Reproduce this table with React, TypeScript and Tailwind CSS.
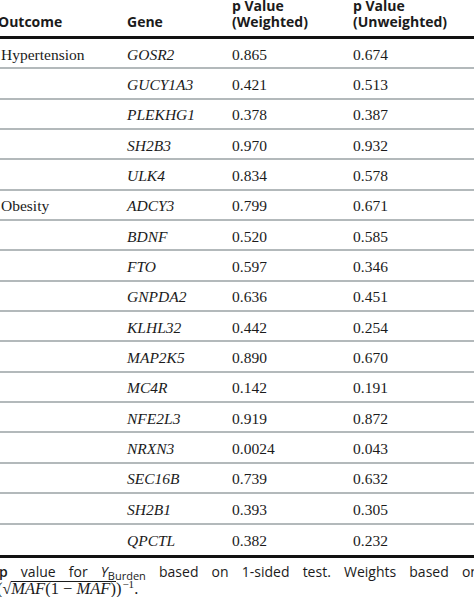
import React from "react";

const rows: [string, string, string, string][] = [
  ["Hypertension", "GOSR2", "0.865", "0.674"],
  ["", "GUCY1A3", "0.421", "0.513"],
  ["", "PLEKHG1", "0.378", "0.387"],
  ["", "SH2B3", "0.970", "0.932"],
  ["", "ULK4", "0.834", "0.578"],
  ["Obesity", "ADCY3", "0.799", "0.671"],
  ["", "BDNF", "0.520", "0.585"],
  ["", "FTO", "0.597", "0.346"],
  ["", "GNPDA2", "0.636", "0.451"],
  ["", "KLHL32", "0.442", "0.254"],
  ["", "MAP2K5", "0.890", "0.670"],
  ["", "MC4R", "0.142", "0.191"],
  ["", "NFE2L3", "0.919", "0.872"],
  ["", "NRXN3", "0.0024", "0.043"],
  ["", "SEC16B", "0.739", "0.632"],
  ["", "SH2B1", "0.393", "0.305"],
  ["", "QPCTL", "0.382", "0.232"],
];

const serif = "font-['Liberation_Serif',serif]";
const sans = "font-['Open_Sans',sans-serif]";

export default function App() {
  return (
    <div className="w-[474px] h-[597px] overflow-hidden bg-white text-[#1b1b1b] relative">
      {/* header */}
      <div className={`grid grid-cols-[127px_105px_121px_121px] ${sans} font-bold text-[14px] leading-[16px] mt-[-2px] pb-[6px] border-b-[3px] border-[#111]`}>
        <div className="self-end ml-[-2px]">Outcome</div>
        <div className="self-end">Gene</div>
        <div>
          <div>p Value</div>
          <div>(Weighted)</div>
        </div>
        <div>
          <div>p Value</div>
          <div>(Unweighted)</div>
        </div>
      </div>
      {/* body */}
      <div className={`${serif} text-[15.5px]`}>
        {rows.map((r, i) => (
          <div
            key={i}
            className={`grid grid-cols-[127px_105px_121px_121px] h-[30.35px] items-center pt-[2px] ${
              i < rows.length - 1 ? "border-b-2 border-[#b3b9bb]" : ""
            }`}
          >
            <div className="pl-[1px]">{r[0]}</div>
            <div className="italic">{r[1]}</div>
            <div>{r[2]}</div>
            <div>{r[3]}</div>
          </div>
        ))}
      </div>
      <div className="border-t-[3px] border-[#111]" />
      {/* footer */}
      <div className={`${sans} text-[14px] leading-[16px] mt-[6px] ml-[-1px] w-[480px]`}>
        <div className="whitespace-nowrap flex justify-between">
          <span className="font-semibold">p</span>
          <span>value</span>
          <span>for</span>
          <span>
            <span className="italic text-[14px]">Y</span>
            <span className="text-[11px] relative top-[3px]">Burden</span>
          </span>
          <span>based</span>
          <span>on</span>
          <span>1-sided</span>
          <span>test.</span>
          <span>Weights</span>
          <span>based</span>
          <span>on</span>
        </div>
        <div className={`${serif} text-[16.5px] leading-[15px] ml-[-2px] whitespace-nowrap`}>
          <span>(</span>
          <span className="text-[16px]">√</span>
          <span className="inline-block leading-[13px] border-t border-[#1b1b1b] italic">
            MAF<span className="not-italic">(1 − </span>MAF<span className="not-italic">)</span>
          </span>
          <span>)</span>
          <sup className="text-[11px] ml-[1px]">−1</sup>
          <span>.</span>
        </div>
      </div>
    </div>
  );
}
